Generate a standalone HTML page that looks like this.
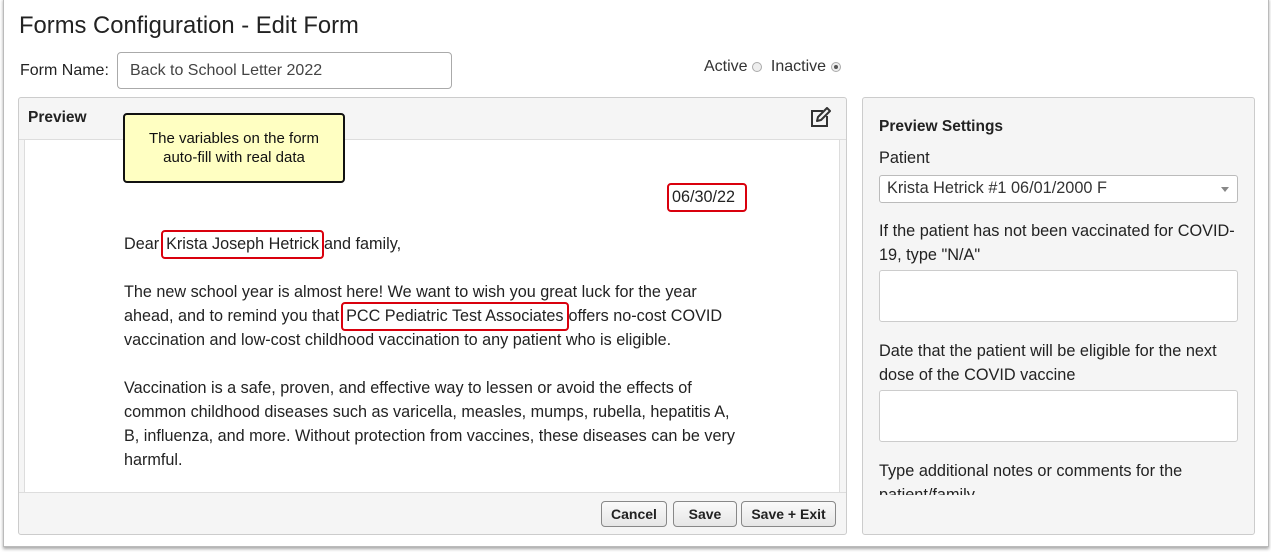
<!DOCTYPE html>
<html><head><style>
*{box-sizing:border-box;margin:0;padding:0}
body{width:1271px;height:552px;background:#fff;font-family:"Liberation Sans",Arial,sans-serif;color:#222;position:relative;overflow:hidden}
.a{position:absolute;white-space:nowrap}
.frame{position:absolute;left:3px;top:-2px;width:1266px;height:549px;border:1px solid #bbb;box-shadow:0 2px 3px rgba(0,0,0,.35)}
.t{font-size:16.2px;line-height:24px}
.r{font-size:16.3px;line-height:24px}
.rb{display:inline-block;border:2px solid #d9000d;border-radius:4px;padding:0 3px;line-height:25px;margin:-3px 0}
.btn{position:absolute;top:501px;height:26px;border:1px solid #888;border-radius:4px;background:linear-gradient(#fafafa,#e6e6e6);font-weight:bold;font-size:14px;line-height:24px;text-align:center;color:#222}
</style></head><body>
<div class="frame"></div>
<div class="a" style="left:19px;top:12px;font-size:23.8px;color:#222">Forms Configuration - Edit Form</div>
<div class="a" style="left:20px;top:62px;font-size:16px">Form Name:</div>
<div class="a" style="left:117px;top:52px;width:335px;height:37px;border:1px solid #aaa;border-radius:4px;padding:9px 12px;font-size:16px;color:#444">Back to School Letter 2022</div>
<div class="a" style="left:704px;top:58px;font-size:16px;color:#333">Active <span style="display:inline-block;width:10px;height:10px;border:1px solid #aaa;border-radius:50%;background:#eee;vertical-align:-1px"></span>&nbsp; Inactive <span style="display:inline-block;width:10px;height:10px;border:1px solid #aaa;border-radius:50%;background:#eee;vertical-align:-1px;position:relative"><span style="position:absolute;left:2px;top:2px;width:4px;height:4px;border-radius:50%;background:#555"></span></span></div>

<div class="a" style="left:18px;top:97px;width:829px;height:438px;border:1px solid #ccc;border-radius:3px;background:#f5f5f5"></div>
<div class="a" style="left:19px;top:139px;width:827px;height:1px;background:#ddd"></div>
<div class="a" style="left:24px;top:140px;width:816px;height:352px;background:#fff;border-left:1px solid #ddd;border-right:1px solid #ddd"></div>
<div class="a" style="left:19px;top:492px;width:827px;height:1px;background:#ddd"></div>
<div class="a" style="left:28px;top:109px;font-size:15.5px;font-weight:bold">Preview</div>
<svg class="a" style="left:809px;top:107px" width="23" height="21" viewBox="0 0 23 21"><path d="M14 4H3v15h15V9" fill="none" stroke="#333" stroke-width="2"/><path d="M8 14l1-4 9-9 3 3-9 9z" fill="none" stroke="#333" stroke-width="2" stroke-linejoin="round"/></svg>

<div class="a t" style="left:667px;top:185px"><span class="rb" style="width:80px">06/30/22</span></div>
<div class="a t" style="left:124px;top:232px">Dear<span class="rb" style="margin-left:2px">Krista Joseph Hetrick</span>and family,</div>
<div class="a t" style="left:124px;top:280px">The new school year is almost here! We want to wish you great luck for the year</div>
<div class="a t" style="left:124px;top:304px">ahead, and to remind you that<span class="rb" style="margin-left:2px">PCC Pediatric Test Associates</span>offers no-cost COVID</div>
<div class="a t" style="left:124px;top:328px">vaccination and low-cost childhood vaccination to any patient who is eligible.</div>
<div class="a t" style="left:124px;top:376px">Vaccination is a safe, proven, and effective way to lessen or avoid the effects of</div>
<div class="a t" style="left:124px;top:400px">common childhood diseases such as varicella, measles, mumps, rubella, hepatitis A,</div>
<div class="a t" style="left:124px;top:424px">B, influenza, and more. Without protection from vaccines, these diseases can be very</div>
<div class="a t" style="left:124px;top:448px">harmful.</div>

<div class="a" style="left:123px;top:113px;width:222px;height:70px;background:#ffffc2;border:2px solid #111;border-radius:4px;font-size:15px;line-height:19px;text-align:center;padding-top:14px;color:#111">The variables on the form<br>auto-fill with real data</div>

<div class="btn" style="left:601px;width:66px">Cancel</div>
<div class="btn" style="left:673px;width:64px">Save</div>
<div class="btn" style="left:741px;width:95px">Save + Exit</div>

<div class="a" style="left:862px;top:97px;width:393px;height:438px;border:1px solid #ccc;border-radius:3px;background:#f5f5f5;overflow:hidden">
 <div class="a" style="left:16px;top:20px;font-size:15.5px;font-weight:bold">Preview Settings</div>
 <div class="a r" style="left:16px;top:48px">Patient</div>
 <div class="a" style="left:16px;top:77px;width:359px;height:28px;border:1px solid #bbb;border-radius:3px;background:#fff;font-size:16.3px;padding:3px 7px;color:#333">Krista Hetrick #1 06/01/2000 F<span style="position:absolute;right:8px;top:11px;border-left:4px solid transparent;border-right:4px solid transparent;border-top:5px solid #888"></span></div>
 <div class="a r" style="left:16px;top:121px">If the patient has not been vaccinated for COVID-<br>19, type "N/A"</div>
 <div class="a" style="left:16px;top:172px;width:359px;height:52px;border:1px solid #ccc;border-radius:3px;background:#fff"></div>
 <div class="a r" style="left:16px;top:241px">Date that the patient will be eligible for the next<br>dose of the COVID vaccine</div>
 <div class="a" style="left:16px;top:292px;width:359px;height:52px;border:1px solid #ccc;border-radius:3px;background:#fff"></div>
 <div class="a" style="left:0;top:361px;width:391px;height:36px;overflow:hidden"><div class="a r" style="left:16px;top:0">Type additional notes or comments for the<br>patient/family</div></div>
</div>
</body></html>
